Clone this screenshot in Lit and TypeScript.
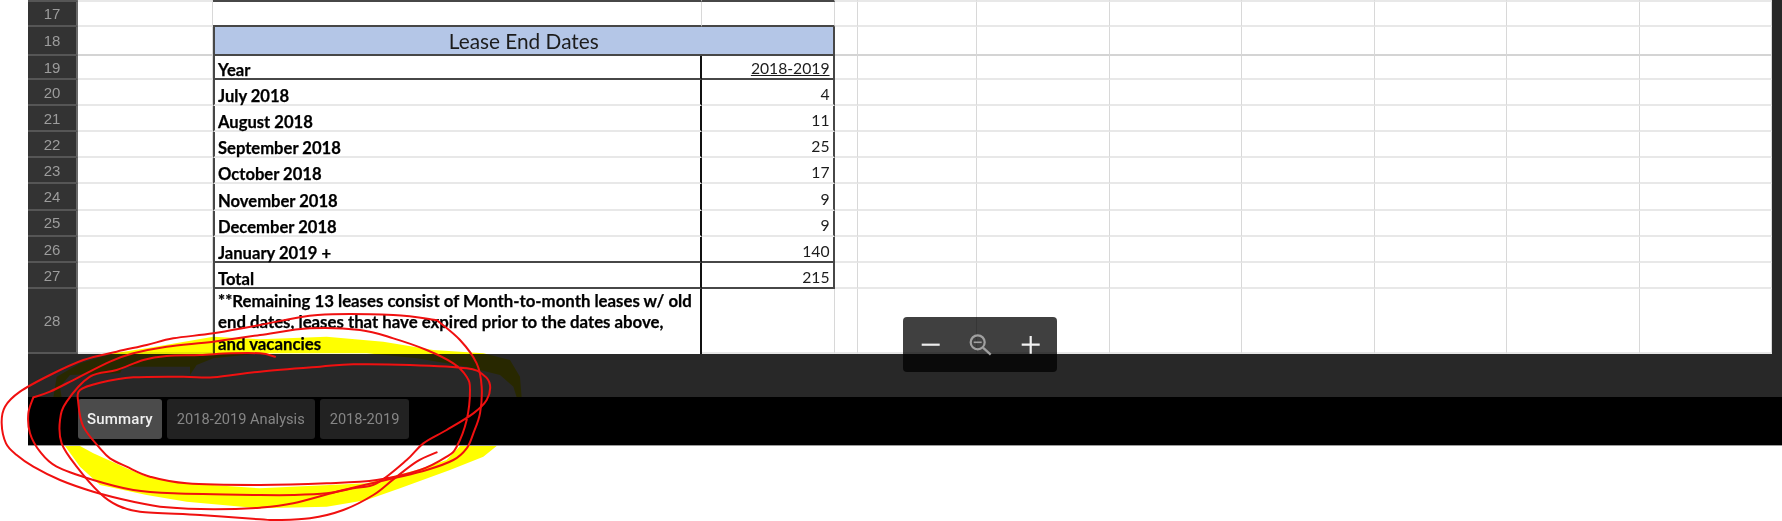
import { LitElement, html, css, svg } from "lit";
import { customElement } from "lit/decorators.js";

type Pt = [number, number];

// Annotation strokes, traced at 3x with the origin at (0, 320).
const OUTER: Pt[] = [[1310,0],[1180,-15],[953,-15],[780,15],[640,40],[520,55],[440,75],[350,95],[250,120],[150,165],[60,215],[15,260],[5,310],[18,370],[50,405],[100,440],[180,480],[280,515],[400,545],[500,562],[640,568],[780,563],[880,550],[1030,510],[1180,475],[1280,450],[1360,420],[1400,385],[1420,340],[1440,280],[1445,200],[1430,130],[1380,60],[1310,0]];
const SPIRAL: Pt[] = [[100,232],[150,215],[230,175],[330,125],[400,100],[500,80],[640,65],[780,45],[930,25],[1080,30],[1180,55],[1280,90],[1360,130],[1400,170],[1410,210],[1400,300],[1370,380],[1340,410],[1260,450],[1130,480],[980,490],[780,495],[560,490],[450,470],[380,440],[330,415],[300,385],[250,320],[235,250],[240,210],[300,188],[400,172],[550,170],[640,172],[780,155],[960,140],[1060,133],[1230,135],[1400,145],[1450,165],[1470,195],[1460,240],[1420,280],[1340,330],[1270,370],[1220,420],[1130,490],[1060,505],[980,520],[880,525],[780,525],[520,520],[400,510],[280,480],[170,440],[120,395],[90,340],[85,280],[100,232]];
const TAIL: Pt[] = [[825,110],[780,100],[690,100],[600,105],[500,108],[430,120],[350,150],[270,170],[200,245],[180,300],[185,370],[230,440],[300,520],[350,555],[420,575],[600,585],[780,598],[830,600],[930,595],[1030,570],[1120,525],[1180,478],[1250,425],[1310,397]];
const YELLOW_TOP: Pt[] = [[160,232],[170,170],[240,130],[340,100],[440,85],[640,50],[780,58],[980,50],[1150,65],[1300,90],[1450,100],[1530,120],[1560,170],[1565,232],[1550,232],[1540,200],[1500,165],[1400,140],[1250,115],[1100,100],[780,100],[640,115],[590,135],[570,165],[570,140],[370,140],[360,160],[210,165],[180,200],[185,232]];
const YELLOW_BOTTOM: Pt[] = [[195,378],[240,440],[300,495],[440,525],[560,545],[780,565],[980,560],[1100,540],[1200,505],[1350,450],[1450,410],[1490,378],[1380,378],[1340,420],[1250,450],[1100,490],[780,505],[560,490],[440,470],[380,445],[280,400],[240,378]];

function smooth(p: Pt[]): string {
  let d = `M${p[0][0]} ${p[0][1]}`;
  for (let i = 0; i < p.length - 1; i++) {
    const a = p[Math.max(i - 1, 0)], b = p[i], c = p[i + 1], e = p[Math.min(i + 2, p.length - 1)];
    d += `C${b[0] + (c[0] - a[0]) / 6} ${b[1] + (c[1] - a[1]) / 6} ${c[0] - (e[0] - b[0]) / 6} ${c[1] - (e[1] - b[1]) / 6} ${c[0]} ${c[1]}`;
  }
  return d;
}
const poly = (p: Pt[]) => "M" + p.map((q) => q.join(" ")).join("L") + "Z";

interface Row { n: string; label?: string; value?: string; under?: boolean; kind?: string }
const ROWS: Row[] = [
  { n: "19", label: "Year", value: "2018-2019", under: true, kind: "dkb" },
  { n: "20", label: "July 2018", value: "4" },
  { n: "21", label: "August 2018", value: "11" },
  { n: "22", label: "September 2018", value: "25" },
  { n: "23", label: "October 2018", value: "17" },
  { n: "24", label: "November 2018", value: "9" },
  { n: "25", label: "December 2018", value: "9" },
  { n: "26", label: "January 2019 +", value: "140", kind: "dkb" },
  { n: "27", label: "Total", value: "215", kind: "dkb" },
];
const BLANKS = [0, 1, 2, 3, 4, 5, 6, 7];
const TABS = ["Summary", "2018-2019 Analysis", "2018-2019"];

@customElement("app-root")
export class AppRoot extends LitElement {
  static styles = css`
    :host { display: block; position: relative; width: 1782px; height: 521px; background: #fff; overflow: hidden; }
    .viewer { margin-left: 28px; display: flex; flex-direction: column; }
    .sheet { display: flex; height: 354px; background: #282828; }
    .grid {
      width: 1743.5px; flex: none; display: grid; background: #fff; filter: blur(0.3px);
      grid-template-columns: 50px 135px 489px 132.5px 23.5px 119px 132.5px 132px 133px 132px 133px 132px;
      grid-template-rows: 2px 25px 29px 24px 26px 26px 26px 26px 26.5px 26.5px 26px 26px 65px;
    }
    .c { box-sizing: border-box; border-right: 1px solid #d8d8d8; border-bottom: 2px solid #e8e8e8; min-width: 0; }
    .hd { background: #333; color: #9c9c9c; font: 15px "Liberation Sans", Arial, sans-serif; border-right: 2px solid #6a6a6a; border-bottom: 2px solid #565656; display: flex; align-items: center; justify-content: center; }
    .mid { border-bottom-color: #d4d4d4; }
    .dkb { border-bottom-color: #474747; }
    .lbl { border-left: 2px solid #474747; border-right: 2px solid #111; font: 700 16.6px Lato, sans-serif; -webkit-text-stroke: 0.25px #000; color: #000; padding-left: 3px; display: flex; align-items: flex-end; white-space: nowrap; line-height: 16px; }
    .val { border-right: 2px solid #474747; font: 400 15.7px Lato, sans-serif; color: #1c1c1c; padding-right: 3px; display: flex; align-items: flex-end; justify-content: flex-end; line-height: 19px; }
    .under { text-decoration: underline; }
    .title { grid-column: span 2; background: #b4c6e7; border-left: 2px solid #474747; border-right: 2px solid #474747; border-bottom: 2px solid #474747; font: 400 20.8px Lato, sans-serif; color: #1c1c1c; display: flex; align-items: center; justify-content: center; }
    .note { align-items: flex-start; padding-top: 1px; font-size: 16.8px; line-height: 21.4px; border-bottom: none; }
    .strip { flex: 1; }
    .bar { height: 43px; background: #282828; }
    .tabs { height: 49px; box-sizing: border-box; background: #000; border-bottom: 1px solid #9a9a9a; display: flex; gap: 5px; padding: 2px 0 0 50px; }
    .tab { height: 40px; box-sizing: border-box; border-radius: 3px; background: #222; color: #868686; font: 400 14.6px Roboto, sans-serif; padding: 0 10px; display: flex; align-items: center; white-space: nowrap; filter: blur(0.25px); }
    .tab.on { background: #4b4b4b; color: #f0f0f0; font-size: 15px; font-weight: 500; letter-spacing: 0.2px; padding: 0 9px; }
    .zoom { position: absolute; left: 903px; top: 317px; width: 154px; height: 55px; border-radius: 4px; background: rgba(0, 0, 0, 0.75); }
    .zoom svg { display: block; }
    .mark { position: absolute; left: 0; top: 0; pointer-events: none; }
    .mult { mix-blend-mode: multiply; }
  `;

  render() {
    return html`
      <div class="viewer">
        <div class="sheet">
          <div class="grid">
            <div class="c hd"></div><div class="c"></div><div class="c dkb"></div><div class="c dkb"></div>${BLANKS.map(() => html`<div class="c"></div>`)}
            <div class="c hd">17</div><div class="c"></div><div class="c dkb"></div><div class="c dkb"></div>${BLANKS.map(() => html`<div class="c"></div>`)}
            <div class="c hd">18</div><div class="c mid"></div><div class="c title">Lease End Dates</div>${BLANKS.map(() => html`<div class="c mid"></div>`)}
            ${ROWS.map((r) => html`
              <div class="c hd">${r.n}</div><div class="c"></div>
              <div class="c lbl ${r.kind ?? ""}"><span>${r.label}</span></div>
              <div class="c val ${r.kind ?? ""}"><span class=${r.under ? "under" : ""}>${r.value}</span></div>
              ${BLANKS.map(() => html`<div class="c"></div>`)}
            `)}
            <div class="c hd">28</div><div class="c"></div>
            <div class="c lbl note"><span>**Remaining 13 leases consist of Month-to-month leases w/ old<br />end dates, leases that have expired prior to the dates above,<br />and vacancies</span></div>
            <div class="c"></div>${BLANKS.map(() => html`<div class="c"></div>`)}
          </div>
          <div class="strip"></div>
        </div>
        <div class="bar"></div>
        <div class="tabs">${TABS.map((t, i) => html`<div class="tab ${i === 0 ? "on" : ""}">${t}</div>`)}</div>
      </div>

      <div class="zoom">
        <svg width="154" height="55" viewBox="0 0 154 55" fill="none">
          <path d="M18.7 27.7H36.7" stroke="#ececec" stroke-width="2.2" />
          <circle cx="74.7" cy="25.3" r="7" stroke="#a0a0a0" stroke-width="2.2" />
          <path d="M70.7 25.3H78.7" stroke="#a0a0a0" stroke-width="1.6" />
          <path d="M80 30.6L87.7 37.6" stroke="#a0a0a0" stroke-width="2.2" />
          <path d="M118.7 27.7H136.7M127.7 19V36.7" stroke="#f2f2f2" stroke-width="2.2" />
        </svg>
      </div>

      <svg class="mark mult" width="1782" height="521" viewBox="0 -960 5346 1563">
        <path d=${poly(YELLOW_TOP)} fill="#ffff00" />
        <path d=${poly(YELLOW_BOTTOM)} fill="#ffff00" />
      </svg>
      <svg class="mark" width="1782" height="521" viewBox="0 -960 5346 1563" fill="none" stroke="#f01010" stroke-width="6" stroke-linecap="round" stroke-linejoin="round">
        ${[OUTER, SPIRAL, TAIL].map((p) => svg`<path d=${smooth(p)} />`)}
      </svg>
    `;
  }
}
